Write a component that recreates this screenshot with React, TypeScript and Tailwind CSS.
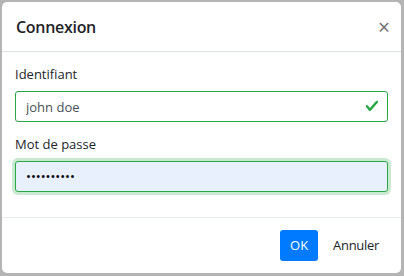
import React from "react";

export default function App() {
  const font = { fontFamily: '"Open Sans", "Noto Sans", Arial, sans-serif' };
  return (
    <div
      className="w-[404px] h-[276px] bg-[#b4b4b4] pt-[2px] pl-[2px] pr-[3px] pb-[3px]"
      style={font}
    >
      <div className="h-full w-full bg-white rounded-[5px] flex flex-col text-[#212529]">
        <div className="flex items-center justify-between pl-[13px] pr-[11px] h-[50px] border-b border-[#dee2e6]">
          <h5 className="text-[16px] leading-[24px] font-semibold text-[#1f2328] tracking-[-0.3px] pl-[1px]">
            Connexion
          </h5>
          <button className="text-[21px] leading-none font-normal text-[#6f6f6f] pt-[1px]">
            ×
          </button>
        </div>
        <div className="px-[13px] pt-[13px] h-[166px] border-b border-[#e9ecef]">
          <div className="mb-[13px]">
            <label className="block text-[13px] leading-[19.5px] mb-[6.5px] text-[#212529]">
              Identifiant
            </label>
            <div className="relative">
              <input
                readOnly
                value="john doe"
                className="block w-full h-[31px] border border-[#28a745] rounded-[3px] pl-[10px] pr-[30px] text-[13px] text-[#495057] outline-none bg-white"
                style={font}
              />
              <svg
                className="absolute right-[9px] top-[8px] w-[14px] h-[14px]"
                viewBox="0 0 8 8"
              >
                <path
                  fill="#28a745"
                  d="M2.3 6.73L.6 4.53c-.4-1.04.46-1.4 1.1-.8l1.1 1.4 3.4-3.8c.6-.63 1.6-.27 1.2.7l-4 4.6c-.43.5-.8.4-1.1.1z"
                />
              </svg>
            </div>
          </div>
          <div>
            <label className="block text-[13px] leading-[19.5px] mb-[6px] text-[#212529]">
              Mot de passe
            </label>
            <input
              readOnly
              type="password"
              value="abcdefghij"
              className="block w-full h-[31px] border border-[#28a745] rounded-[3px] px-[10px] text-[13px] text-black outline-none bg-[#e8f0fe] shadow-[0_0_0_3px_rgba(40,167,69,0.25)]"
              style={font}
            />
          </div>
        </div>
        <div className="flex-1 flex items-center justify-end pl-[13px] pr-[12px] gap-[5px]">
          <button className="h-[31px] w-[38px] bg-[#007bff] text-white text-[13px] rounded-[3px]">
            OK
          </button>
          <button className="h-[31px] px-[10px] text-[13px] text-[#212529] rounded-[3px] tracking-[-0.3px]">
            Annuler
          </button>
        </div>
      </div>
    </div>
  );
}
